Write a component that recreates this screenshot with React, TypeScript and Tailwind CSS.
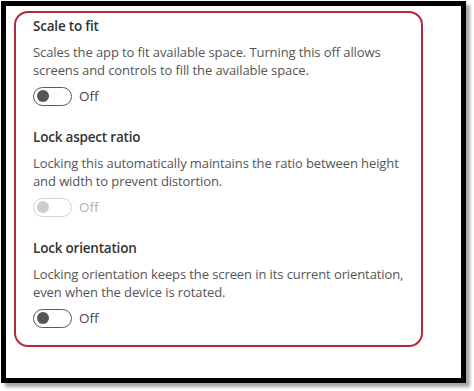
import React from 'react';

interface SettingProps {
  title: string;
  description: string;
  disabled?: boolean;
}

function Toggle({ disabled }: { disabled?: boolean }) {
  return (
    <div className="flex items-center gap-[7px]">
      <div
        className={`flex h-[19px] w-[39px] items-center rounded-full border px-[3px] ${
          disabled ? 'border-[#d4d4d4]' : 'border-[#5a5a5a]'
        }`}
      >
        <div className={`h-[12px] w-[12px] rounded-full ${disabled ? 'bg-[#cccccc]' : 'bg-[#555555]'}`} />
      </div>
      <span className={`text-[13.5px] leading-[20px] ${disabled ? 'text-[#b0b0b0]' : 'text-[#444444]'}`}>Off</span>
    </div>
  );
}

function Setting({ title, description, disabled }: SettingProps) {
  return (
    <div className="flex flex-col">
      <div className="text-[13.5px] font-semibold leading-[20px] tracking-[-0.2px] text-[#333333]">{title}</div>
      <p className="mt-[7px] max-w-[374px] text-[13px] leading-[18px] tracking-[-0.1px] text-[#555555]">{description}</p>
      <div className="mt-[7px]">
        <Toggle disabled={disabled} />
      </div>
    </div>
  );
}

export default function App() {
  return (
    <div className="h-[391px] w-[474px] bg-white p-[1px]" style={{ fontFamily: '"Open Sans", "Noto Sans", sans-serif' }}>
      <div className="h-[382px] w-[465px] border-[5px] border-black bg-white shadow-[4px_4px_3px_rgba(0,0,0,0.35)]">
        <div className="ml-[8px] mt-[5px] flex h-[336px] w-[409px] flex-col gap-[21px] rounded-[14px] border-2 border-[#b4283a] pl-[17px] pt-[3px]">
          <Setting
            title="Scale to fit"
            description="Scales the app to fit available space. Turning this off allows screens and controls to fill the available space."
          />
          <Setting
            title="Lock aspect ratio"
            description="Locking this automatically maintains the ratio between height and width to prevent distortion."
            disabled
          />
          <Setting
            title="Lock orientation"
            description="Locking orientation keeps the screen in its current orientation, even when the device is rotated."
          />
        </div>
      </div>
    </div>
  );
}
